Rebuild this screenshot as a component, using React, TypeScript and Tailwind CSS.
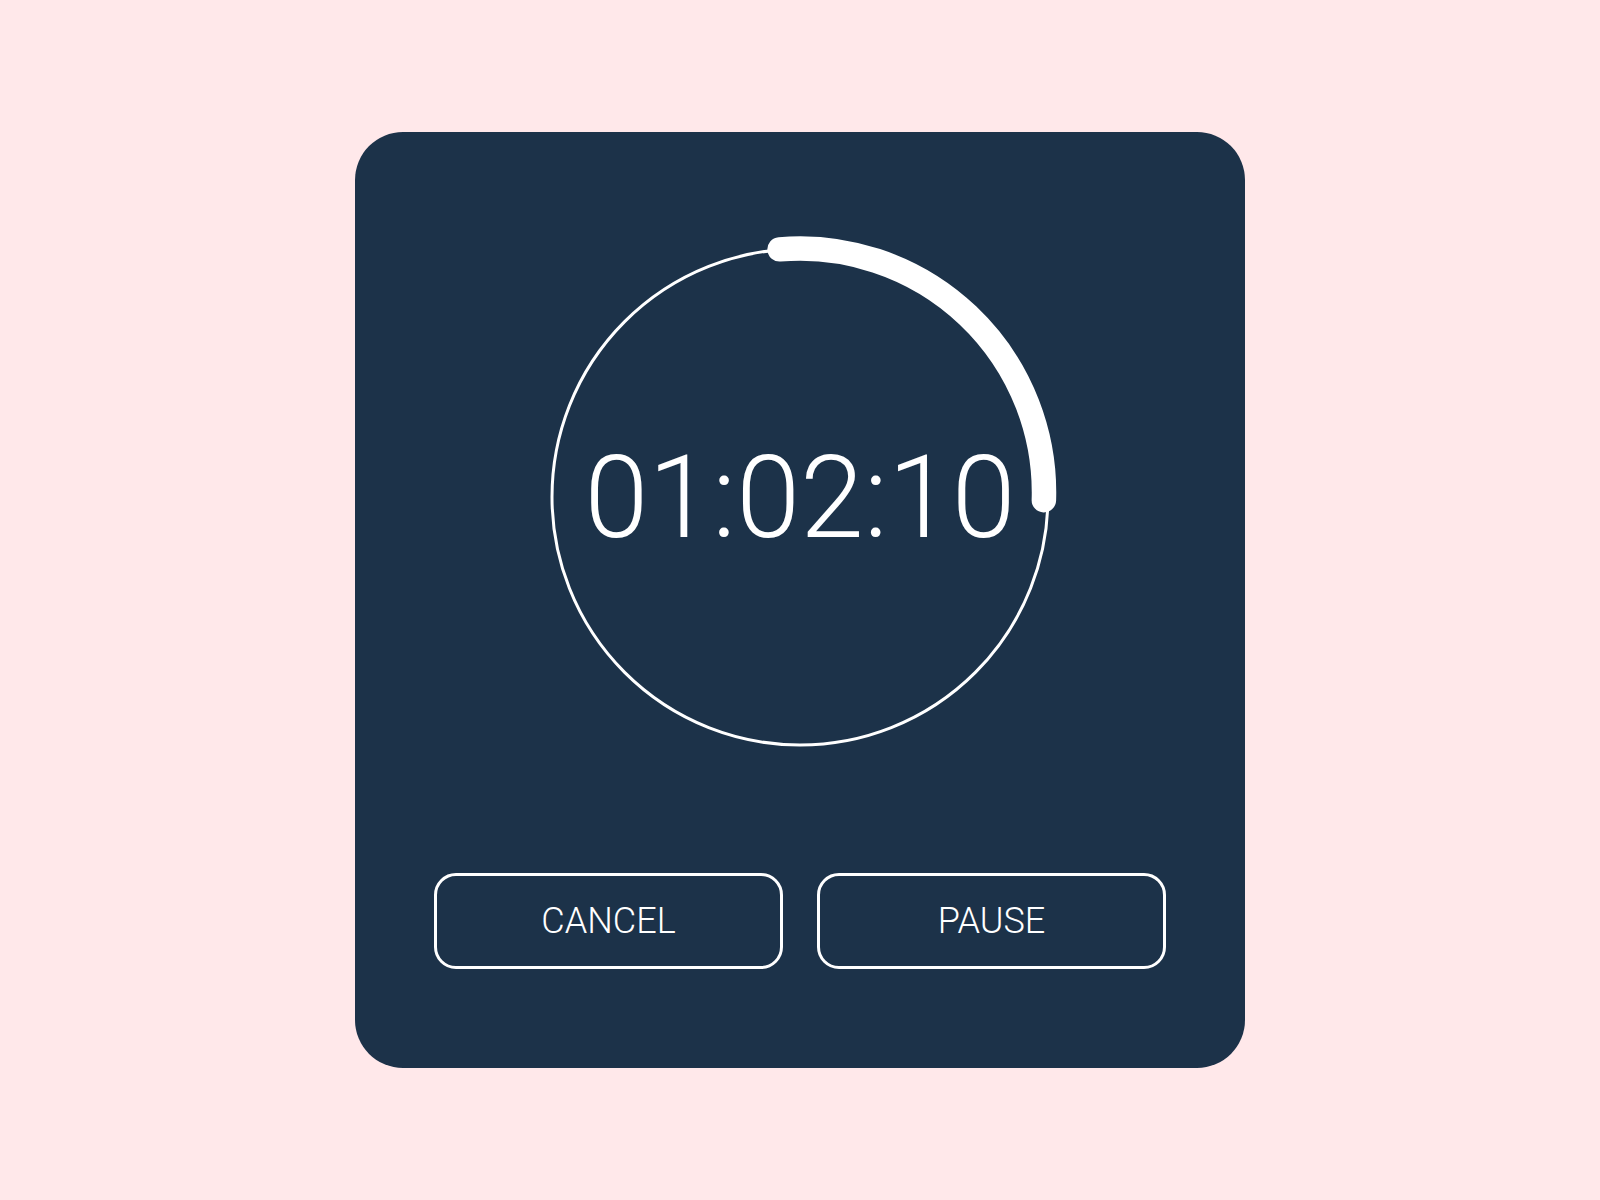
import React, { useState } from "react";

// ring geometry, in the svg's own 520x520 box
const SIZE = 520;
const C = SIZE / 2;
const R = 248;

// the progress arc sits a touch inside the track
const ARC = { cx: 260, cy: 255.5, r: 244 };

const polar = (deg: number) => {
  const rad = (deg * Math.PI) / 180;
  return { x: ARC.cx + ARC.r * Math.sin(rad), y: ARC.cy - ARC.r * Math.cos(rad) };
};

const arcPath = (from: number, to: number) => {
  const a = polar(from);
  const b = polar(to);
  const large = to - from > 180 ? 1 : 0;
  return `M ${a.x} ${a.y} A ${ARC.r} ${ARC.r} 0 ${large} 1 ${b.x} ${b.y}`;
};

const TimerRing: React.FC<{ start: number; end: number }> = ({ start, end }) => (
  <svg
    width={SIZE}
    height={SIZE}
    viewBox={`0 0 ${SIZE} ${SIZE}`}
    overflow="visible"
    className="absolute inset-0 overflow-visible"
  >
    <circle cx={C} cy={C} r={R} fill="none" stroke="#ffffff" strokeWidth={3} />
    <path d={arcPath(start, end)} fill="none" stroke="#ffffff" strokeWidth={24.5} strokeLinecap="round" />
  </svg>
);

const App: React.FC = () => {
  const [paused, setPaused] = useState(false);
  const time = "01:02:10";

  return (
    <div
      className="min-h-screen w-full bg-[#ffe8ea] flex items-center justify-center"
      style={{ fontFamily: "Roboto, 'Liberation Sans', sans-serif" }}
    >
      <div className="w-[890px] h-[936px] bg-[#1c3249] rounded-[48px] flex flex-col items-center pt-[105px]">
        <div className="relative w-[520px] h-[520px]">
          <TimerRing start={-4.8} end={91.8} />
          <div className="absolute inset-0 flex items-center justify-center">
            <span className="text-white text-[115px] leading-none font-light">{time}</span>
          </div>
        </div>

        <div className="grid grid-cols-2 gap-[34px] w-full px-[79px] mt-[116px]">
          <button className="h-[96px] rounded-[22px] border-[3px] border-white text-white text-[36px] font-light leading-none flex items-center justify-center">
            CANCEL
          </button>
          <button
            onClick={() => setPaused(!paused)}
            className="h-[96px] rounded-[22px] border-[3px] border-white text-white text-[36px] font-light leading-none flex items-center justify-center"
          >
            {paused ? "RESUME" : "PAUSE"}
          </button>
        </div>
      </div>
    </div>
  );
};

export default App;
